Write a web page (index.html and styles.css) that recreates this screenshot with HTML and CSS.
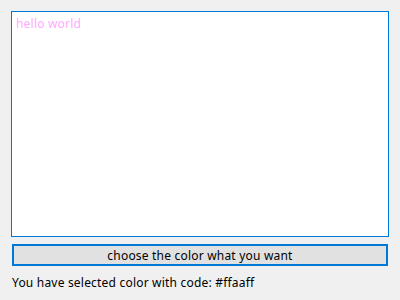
FILE: index.html
```html
<!DOCTYPE html>
<html lang="en">
<head>
    <meta charset="UTF-8">
    <title>Color chooser</title>
    <link rel="stylesheet" href="styles.css">
</head>
<body>

<div class="window">
    <textarea class="editor" id="editor">hello world</textarea>
    <button class="choose" id="choose">choose the color what you want</button>
    <div class="status" id="status">You have selected color with code: #ffaaff</div>
</div>

</body>
</html>
```

FILE: styles.css
```css
body {
    margin: 0;
    background-color: #f0f0f0;
    font-family: "Noto Sans", "Open Sans", sans-serif;
    font-size: 12px;
    letter-spacing: 0.2px;
}
.window {
    display: flex;
    flex-direction: column;
    padding: 11px 12px 0 11px;
}
.editor {
    width: 378px;
    height: 226px;
    box-sizing: border-box;
    margin: 0;
    padding: 3px 4px;
    border: 1px solid #0078d7;
    background-color: white;
    color: #ffaaff;
    font-family: inherit;
    font-size: 12px;
    letter-spacing: inherit;
    resize: none;
    outline: none;
}
.choose {
    margin: 7px 0 0 1px;
    width: 376px;
    height: 22px;
    box-sizing: border-box;
    padding: 0;
    border: 2px solid #0078d7;
    background-color: #e1e1e1;
    color: #000;
    font-family: inherit;
    font-size: 12px;
    letter-spacing: inherit;
}
.status {
    margin: 8px 0 0 1px;
    color: #000;
}
```
